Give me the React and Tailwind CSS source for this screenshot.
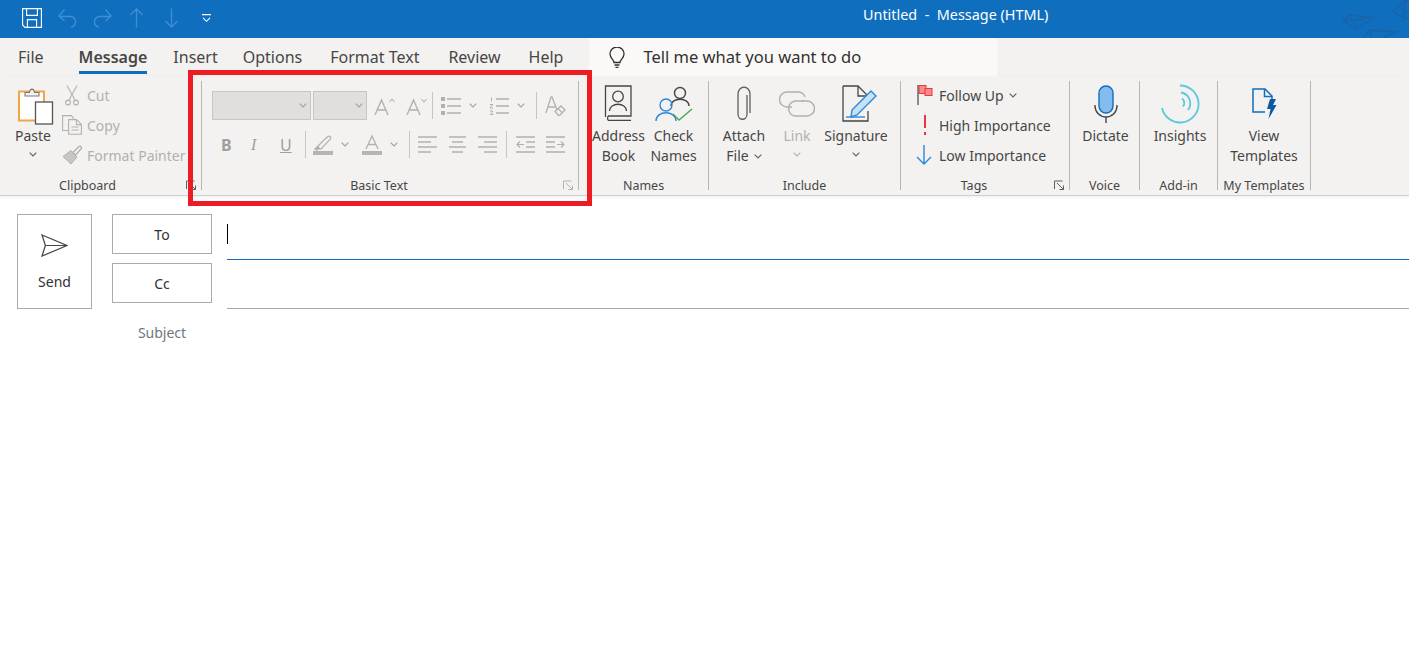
import React from 'react'

const font = { fontFamily: '"Noto Sans", "Open Sans", sans-serif' }

function Chevron({ className = '', color = '#605e5c' }) {
  return (
    <svg width="8" height="5" viewBox="0 0 8 5" className={className} fill="none" stroke={color} strokeWidth="1.1">
      <path d="M.7.7 4 4 7.3.7" />
    </svg>
  )
}

function Launcher({ color = '#605e5c' }) {
  return (
    <svg width="11" height="11" viewBox="0 0 11 11" fill="none" stroke={color} strokeWidth="1" className="absolute right-[4px] bottom-[5px]">
      <path d="M8.5 1H.5v8" />
      <path d="M3 3l6.5 6.5M9.5 5.5v4h-4" />
    </svg>
  )
}

function Sep() {
  return <div className="w-px h-[109px] shrink-0 bg-[#b8b6b4]" />
}

function VSep({ h = 'h-[27px]', className = '' }) {
  return <div className={`w-px ${h} bg-[#c8c6c4] ${className}`} />
}

function Group({ width, label, labelPad = '', launcher, launcherColor, children }) {
  return (
    <div className={`relative shrink-0 flex flex-col h-[115px] ${width}`}>
      <div className="h-[95px] flex">{children}</div>
      <div className={`h-[20px] leading-[20px] text-center text-[12.5px] text-[#484644] whitespace-nowrap ${labelPad}`}>{label}</div>
      {launcher && <Launcher color={launcherColor} />}
    </div>
  )
}

function BigBtn({ width, icon, lines, disabled, className = '' }) {
  return (
    <div className={`shrink-0 flex flex-col items-center ${width} ${className}`}>
      <div className="h-[45px] flex items-center justify-center">{icon}</div>
      <div className={`text-[14px] leading-[20px] text-center whitespace-nowrap ${disabled ? 'text-[#b3b0ad]' : 'text-[#484644]'}`}>
        {lines.map((l, i) => <div key={i} className="h-[20px]">{l}</div>)}
      </div>
    </div>
  )
}

function SmallRow({ icon, text, disabled, iconWidth = 'w-[25px]' }) {
  return (
    <div className="h-[30px] flex items-center whitespace-nowrap">
      <div className={`${iconWidth} flex items-center`}>{icon}</div>
      <span className={`text-[14px] ${disabled ? 'text-[#b3b0ad]' : 'text-[#484644]'}`}>{text}</span>
    </div>
  )
}

const grey = '#b3b0ad'

function SaveIcon() {
  return (
    <svg width="20" height="20" viewBox="0 0 20 20" fill="none" stroke="#fff" strokeWidth="1.1">
      <path d="M.6.6h18.8v18.8H3L.6 17z" />
      <path d="M4.6.8v6.6h10.8V.8" />
      <path d="M5.4 19.2v-7.6h9.2v7.6" />
    </svg>
  )
}

function UndoIcon({ flip }) {
  return (
    <svg width="19" height="20" viewBox="0 0 19 20" fill="none" stroke="#3e8ed4" strokeWidth="1.4" className={flip ? '-scale-x-100' : ''}>
      <path d="M1 8.5h11a5.4 5.4 0 0 1 3.5 9.6L13 19.6" />
      <path d="M6.5 1.5 1 8l5.5 5" />
    </svg>
  )
}

function ArrowV({ down }) {
  return (
    <svg width="13" height="20" viewBox="0 0 13 20" fill="none" stroke="#3e8ed4" strokeWidth="1.4" className={down ? 'rotate-180' : ''}>
      <path d="M6.5 19.5V1M.5 7 6.500 1l6 6" />
    </svg>
  )
}

function Customize() {
  return (
    <svg width="9" height="9" viewBox="0 0 9 9" fill="none" stroke="#fff" strokeWidth="1.1">
      <path d="M0 .6h9M1 3.8l3.5 3.5L8 3.8" />
    </svg>
  )
}

function Origami() {
  return (
    <svg width="70" height="38" viewBox="0 0 70 38" fill="none" stroke="#1a63a8" strokeWidth="1.4" className="absolute right-0 top-0">
      <path d="M4 21 11 15l23 3-17 11zM11 15l6 14M4 21l22-2" />
      <path d="M24 38 31 30l26 2-13 6M31 30l2 8" />
      <path d="M53 12 66 1h4M53 12l17 7M66 1l-1 18M60 7l10 6" />
    </svg>
  )
}

function PasteIcon() {
  return (
    <svg width="36" height="39" viewBox="0 0 36 39">
      <rect x="1" y="5.5" width="25" height="29" fill="#fff" stroke="#f0a646" strokeWidth="2" />
      <path d="M7 10V6.5h4.5C12 2 16 2 16.5 6.5H21V10z" fill="#f3f2f1" stroke="#7a7876" strokeWidth="1.1" />
      <rect x="17.5" y="16" width="17" height="22" fill="#fff" stroke="#565452" strokeWidth="1.3" />
    </svg>
  )
}

function CutIcon() {
  return (
    <svg width="14" height="21" viewBox="0 0 14 21" fill="none" stroke={grey} strokeWidth="1.1" className="ml-[3px]">
      <path d="M2 .5 10 15M12 .5 4 15" />
      <circle cx="3" cy="17.5" r="2.4" />
      <circle cx="11" cy="17.5" r="2.4" />
    </svg>
  )
}

function CopyIcon() {
  return (
    <svg width="20" height="20" viewBox="0 0 20 20" fill="none" stroke={grey} strokeWidth="1.1">
      <path d="M6 15.5H.6V.6h8.8l2.4 3" />
      <path d="M6.6 4.6h8l4.8 4.8v9.9H6.6zM14.4 4.8v4.8h4.8M9.5 12h7M9.5 15h7" />
    </svg>
  )
}

function PainterIcon() {
  return (
    <svg width="21" height="20" viewBox="0 0 21 20">
      <path d="M1 11.5 9 5.5l6 6.5-6 7z" fill="#c8c6c4" stroke={grey} />
      <path d="M11 7.5 17 1.5c1.5-1 3 .5 2.2 2.2L13.5 10z" fill="none" stroke={grey} strokeWidth="1.4" />
    </svg>
  )
}

function Lines({ align }) {
  const rows = {
    left: [[0, 19], [0, 13], [0, 19], [0, 13]],
    center: [[1, 18], [4, 15], [1, 18], [4, 15]],
    right: [[0, 19], [6, 19], [0, 19], [6, 19]],
  }[align]
  return (
    <svg width="19" height="17" viewBox="0 0 19 17" stroke={grey} strokeWidth="1.5">
      {rows.map((r, i) => <path key={i} d={`M${r[0]} ${1 + i * 5}H${r[1]}`} />)}
    </svg>
  )
}

function Indent({ flip }) {
  return (
    <svg width="19" height="17" viewBox="0 0 19 17" fill="none" stroke={grey} strokeWidth="1.5" className={flip ? '-scale-x-100' : ''}>
      <path d="M0 1h19M10 6h9M10 11h9M0 16h19" />
      <path d="M8 8.5H1M4 5.5l-3 3 3 3" strokeWidth="1.2" />
    </svg>
  )
}

function GrowA({ up }) {
  return (
    <svg width="22" height="20" viewBox="0 0 22 20" fill="none" stroke={grey}>
      <path d="M2 19 8.500 4 15 19M4.300 14h8.400" strokeWidth="1.4" />
      <path d={up ? 'M16.500 6 19 3l2.500 3' : 'M16.500 3 19 6l2.500-3'} strokeWidth="1.1" />
    </svg>
  )
}

function Bullets() {
  return (
    <svg width="20" height="18" viewBox="0 0 20 18" stroke={grey} strokeWidth="1.5" fill={grey}>
      <rect x=".5" y=".5" width="3" height="3" strokeWidth="1" />
      <rect x=".5" y="7.5" width="3" height="3" strokeWidth="1" />
      <rect x=".5" y="14.5" width="3" height="3" strokeWidth="1" />
      <path d="M6 2h14M6 9h14M6 16h14" />
    </svg>
  )
}

function Numbering() {
  return (
    <svg width="20" height="18" viewBox="0 0 20 18" stroke={grey} strokeWidth="1.5">
      <path d="M7 2h13M7 9h13M7 16h13" />
      <path d="M2.500.5v4M.8 7.500h3L1 11h3M.8 14h3l-1.400 1.600L4 17.500H.8" fill="none" strokeWidth="1" />
    </svg>
  )
}

function ClearFormat() {
  return (
    <svg width="21" height="20" viewBox="0 0 21 20" fill="none" stroke={grey}>
      <path d="M1 17 6 1h1l5 13M3 11h7" strokeWidth="1.3" />
      <path d="M10 15.500 16 10l4 4-5.500 5.500h-1z" strokeWidth="1.3" />
      <path d="M13 12.500 17 16.500" strokeWidth="1.100" />
    </svg>
  )
}

function Highlighter() {
  return (
    <svg width="20" height="20" viewBox="0 0 20 20">
      <path d="M2 14 12 4l3-2.500c1.800-1 3.500.8 2.500 2.500L8 14H5l-1 1.500z" fill="none" stroke={grey} strokeWidth="1.200" />
      <path d="M1 15 5 11l3 3H3z" fill={grey} />
      <rect y="16" width="20" height="4" fill="#b8b4af" />
    </svg>
  )
}

function FontColor() {
  return (
    <svg width="20" height="20" viewBox="0 0 20 20">
      <path d="M4 14 10 1l6 13M6.200 9.500h7.600" fill="none" stroke={grey} strokeWidth="1.300" />
      <rect y="16" width="20" height="4" fill="#b8b4af" />
    </svg>
  )
}

function AddressBook() {
  return (
    <svg width="28" height="36" viewBox="0 0 28 36" fill="none" stroke="#484644" strokeWidth="1.300" className="mr-[2px] mb-[2px]">
      <path d="M1.500 32V1h25.500v30H4.500a3 3 0 0 0 0 4.400h22.500" />
      <circle cx="14" cy="11.500" r="5.300" />
      <path d="M5.500 26c0-9 17-9 17 0" />
    </svg>
  )
}

function CheckNames() {
  return (
    <svg width="39" height="38" viewBox="0 0 39 38" fill="none" strokeWidth="1.400" className="ml-[2px]">
      <circle cx="25" cy="8" r="5.500" stroke="#484644" />
      <path d="M16 21c0-9 18-9 18 0" stroke="#484644" />
      <circle cx="11" cy="20" r="6" stroke="#2b88d8" />
      <path d="M1 36c0-11 20-11 20 0" stroke="#2b88d8" />
      <path d="M18 29l6 6L37 24" stroke="#4ba757" />
    </svg>
  )
}

function Clip() {
  return (
    <svg width="16" height="36" viewBox="0 0 16 36" fill="none" stroke="#605e5c" strokeWidth="1.300">
      <path d="M11.500 9v19c0 7-9 7-9 0V8c0-9 12-9 12 0v19" transform="translate(-.5 0)" />
    </svg>
  )
}

function LinkIcon() {
  return (
    <svg width="36" height="26" viewBox="0 0 36 26" fill="none" stroke={grey} strokeWidth="1.400">
      <path d="M13 16H8A7.500 7.500 0 0 1 8 1h11a7.500 7.500 0 0 1 7 5" />
      <path d="M23 10h5a7.500 7.500 0 0 1 0 15H17a7.500 7.500 0 0 1-7-5" />
      <path d="M10 20a7.500 7.500 0 0 1 7-10h8" />
    </svg>
  )
}

function SignatureIcon() {
  return (
    <svg width="36" height="37" viewBox="0 0 36 37" fill="none" className="ml-[7px]">
      <path d="M1 1h15l10 10v2M26 26v10H1V1" stroke="#484644" strokeWidth="1.300" />
      <path d="M16 1v10h10" stroke="#484644" strokeWidth="1.300" />
      <path d="M10 25 29 6l5 5-19 19-6 2z" fill="#c5e2f7" stroke="#2b88d8" strokeWidth="1.400" />
      <path d="M4 32h19" stroke="#2b88d8" strokeWidth="1.400" />
    </svg>
  )
}

function FlagIcon() {
  return (
    <svg width="16" height="20" viewBox="0 0 16 20" className="ml-[1px]">
      <path d="M1 0v20" stroke="#605e5c" strokeWidth="1.400" />
      <rect x="2" y=".5" width="7" height="8" fill="#f58b8b" stroke="#e8383c" />
      <rect x="8" y="3.500" width="7" height="7" fill="#f58b8b" stroke="#e8383c" />
    </svg>
  )
}

function Mic() {
  return (
    <svg width="24" height="38" viewBox="0 0 24 38" fill="none">
      <rect x="5" y="1" width="14" height="27" rx="7" fill="#83bced" stroke="#106ebe" strokeWidth="1.400" />
      <path d="M1 20v1a11 11 0 0 0 22 0v-1M12 32v6" stroke="#484644" strokeWidth="1.400" />
    </svg>
  )
}

function Insights() {
  return (
    <svg width="40" height="40" viewBox="0 0 40 40" fill="none" stroke="#5bc8dc" strokeWidth="1.800">
      <path d="M20 1.500A18.500 18.500 0 1 1 2 24" />
      <path d="M21 8.500A11 11 0 0 1 28 26" />
      <path d="M22 14.500a5.500 5.500 0 0 1 1 8" />
    </svg>
  )
}

function TemplatesIcon() {
  return (
    <svg width="25" height="31" viewBox="0 0 25 31" fill="none">
      <path d="M13 24H1V1h12l7 7v5" stroke="#106ebe" strokeWidth="1.500" />
      <path d="M12.500 1v7.500h7.500" stroke="#106ebe" strokeWidth="1.500" />
      <path d="M18 11h6l-3 6h3.500l-8 14 2-10H15z" fill="#0f5a9e" />
    </svg>
  )
}

function Bulb() {
  return (
    <svg width="16" height="21" viewBox="0 0 16 21" fill="none" stroke="#323130" strokeWidth="1.300">
      <path d="M5 15.500c0-3-4-4-4-8.500a7 7 0 0 1 14 0c0 4.500-4 5.500-4 8.500z" />
      <path d="M5.500 18h5M6.500 20.300h3" />
    </svg>
  )
}

function SendIcon() {
  return (
    <svg width="27" height="23" viewBox="0 0 28 24" fill="none" stroke="#484644" strokeWidth="1.300">
      <path d="M1 1 27 12 1 23 4.500 12zM4.500 12H27" />
    </svg>
  )
}

function Tab({ children, className = '' }) {
  return <div className={`text-[16px] text-[#484644] leading-[38px] whitespace-nowrap ${className}`}>{children}</div>
}

function Select({ width }) {
  return (
    <div className={`${width} h-[29px] border border-[#c8c6c4] bg-[#e1dfdd] flex items-center justify-end pr-[3px]`}>
      <Chevron color="#a19f9d" />
    </div>
  )
}

export default function App() {
  return (
    <div className="relative w-[1409px] h-[648px] overflow-hidden bg-white" style={font}>
      {/* title bar */}
      <div className="relative h-[38px] bg-[#106ebe] flex items-start">
        <div className="flex items-center h-[36px] pl-[22px]">
          <SaveIcon />
          <div className="ml-[16px]"><UndoIcon /></div>
          <div className="ml-[16px]"><UndoIcon flip /></div>
          <div className="ml-[18px]"><ArrowV /></div>
          <div className="ml-[22px]"><ArrowV down /></div>
          <div className="ml-[24px]"><Customize /></div>
        </div>
        <div className="absolute left-[863px] top-0 leading-[30px] text-[14.4px] text-white whitespace-pre">Untitled  -  Message (HTML)</div>
        <Origami />
      </div>

      {/* tabs */}
      <div className="h-[38px] bg-[#f3f2f1] flex items-start">
        <Tab className="ml-[18px]">File</Tab>
        <div className="relative ml-[35px]">
          <Tab className="font-semibold">Message</Tab>
          <div className="absolute left-0 right-0 bottom-[2px] h-[3px] bg-[#106ebe]" />
        </div>
        <Tab className="ml-[26px]">Insert</Tab>
        <Tab className="ml-[25px]">Options</Tab>
        <Tab className="ml-[28px]">Format Text</Tab>
        <Tab className="ml-[29px]">Review</Tab>
        <Tab className="ml-[28px]">Help</Tab>
        <div className="ml-[26px] w-[408px] h-[38px] bg-[#faf9f8] flex items-center pl-[20px]">
          <Bulb />
          <span className="ml-[18px] text-[16.5px] text-[#323130]">Tell me what you want to do</span>
        </div>
      </div>

      {/* ribbon */}
      <div className="h-[120px] bg-[#f3f2f1] pt-[5px] flex items-start border-b border-[#d2d0ce] shadow-[0_1px_3px_rgba(0,0,0,0.08)]">
        <Group width="w-[201px]" label="Clipboard" labelPad="pr-[26px]" launcher>
          <BigBtn width="w-[50px] ml-[8px]" icon={<div className="mt-[4px] ml-[5px]"><PasteIcon /></div>} lines={['Paste', <Chevron key="c" className="mx-auto mt-[6px]" />]} />
          <div className="ml-[4px] -mt-[1px]">
            <SmallRow disabled text="Cut" icon={<CutIcon />} />
            <SmallRow disabled text="Copy" icon={<CopyIcon />} />
            <SmallRow disabled text="Format Painter" icon={<PainterIcon />} />
          </div>
        </Group>
        <Sep />

        <Group width="w-[376px]" label="Basic Text" labelPad="pr-[22px]" launcher launcherColor={grey}>
          <div className="pl-[10px] pt-[10px]">
            <div className="flex items-center h-[29px]">
              <Select width="w-[99px]" />
              <div className="ml-[2px]"><Select width="w-[54px]" /></div>
              <div className="ml-[6px]"><GrowA up /></div>
              <div className="ml-[10px]"><GrowA /></div>
              <VSep className="ml-[5px]" />
              <div className="ml-[8px]"><Bullets /></div>
              <Chevron className="ml-[8px]" color="#a19f9d" />
              <div className="ml-[12px]"><Numbering /></div>
              <Chevron className="ml-[8px]" color="#a19f9d" />
              <VSep className="ml-[11px]" />
              <div className="ml-[8px]"><ClearFormat /></div>
            </div>
            <div className="flex items-center h-[27px] mt-[11px]">
              <span className="ml-[9px] w-[20px] text-[16px] font-bold text-[#a19f9d]">B</span>
              <span className="ml-[10px] w-[20px] text-[16px] italic text-[#a19f9d]" style={{ fontFamily: '"Liberation Serif", serif' }}>I</span>
              <span className="ml-[9px] w-[20px] text-[16px] underline text-[#a19f9d]">U</span>
              <VSep className="ml-[5px]" />
              <div className="ml-[7px]"><Highlighter /></div>
              <Chevron className="ml-[8px]" color="#a19f9d" />
              <div className="ml-[13px]"><FontColor /></div>
              <Chevron className="ml-[8px]" color="#a19f9d" />
              <VSep className="ml-[11px]" />
              <div className="ml-[8px]"><Lines align="left" /></div>
              <div className="ml-[11px]"><Lines align="center" /></div>
              <div className="ml-[11px]"><Lines align="right" /></div>
              <VSep className="ml-[9px]" />
              <div className="ml-[9px]"><Indent /></div>
              <div className="ml-[11px]"><Indent flip /></div>
            </div>
          </div>
        </Group>
        <Sep />

        <Group width="w-[129px]" label="Names">
          <BigBtn width="w-[55px] ml-[12px]" icon={<AddressBook />} lines={['Address', 'Book']} />
          <BigBtn width="w-[55px]" icon={<CheckNames />} lines={['Check', 'Names']} />
        </Group>
        <Sep />

        <Group width="w-[191px]" label="Include">
          <BigBtn width="w-[52px] ml-[9px]" icon={<Clip />} lines={['Attach', <span key="f" className="inline-flex items-center gap-[5px]">File <Chevron /></span>]} />
          <BigBtn width="w-[54px]" disabled icon={<LinkIcon />} lines={['Link', <Chevron key="c" className="mx-auto mt-[6px]" color={grey} />]} />
          <BigBtn width="w-[64px]" icon={<SignatureIcon />} lines={['Signature', <Chevron key="c" className="mx-auto mt-[6px]" />]} />
        </Group>
        <Sep />

        <Group width="w-[168px]" label="Tags" labelPad="pr-[22px]" launcher>
          <div className="ml-[15px] -mt-[1px]">
            <SmallRow iconWidth="w-[23px]" text={<span className="inline-flex items-center gap-[5px]">Follow Up <Chevron /></span>} icon={<FlagIcon />} />
            <SmallRow iconWidth="w-[23px]" text="High Importance" icon={<span className="ml-[8px] w-[2px] h-[20px] flex flex-col justify-between"><span className="h-[13px] bg-[#e8383c]" /><span className="h-[3px] bg-[#e8383c]" /></span>} />
            <SmallRow iconWidth="w-[23px]" text="Low Importance" icon={
              <svg width="16" height="20" viewBox="0 0 16 20" fill="none" stroke="#2b88d8" strokeWidth="1.400"><path d="M8 0v19M1 12l7 7 7-7" /></svg>
            } />
          </div>
        </Group>
        <Sep />

        <Group width="w-[69px]" label="Voice">
          <BigBtn width="w-[69px] pl-[2px]" icon={<Mic />} lines={['Dictate']} />
        </Group>
        <Sep />

        <Group width="w-[77px]" label="Add-in">
          <BigBtn width="w-[77px] pl-[3px]" icon={<Insights />} lines={['Insights']} />
        </Group>
        <Sep />

        <Group width="w-[92px]" label="My Templates">
          <BigBtn width="w-[92px]" icon={<TemplatesIcon />} lines={['View', 'Templates']} />
        </Group>
        <Sep />
      </div>

      {/* compose */}
      <div className="flex items-start pl-[17px] pt-[18px]">
        <div className="w-[75px] h-[95px] border border-[#ababab] flex flex-col items-center pt-[19px]">
          <SendIcon />
          <span className="mt-[14px] text-[14px] text-[#323130]">Send</span>
        </div>
        <div className="ml-[20px] w-[100px]">
          <div className="h-[40px] border border-[#ababab] flex items-center justify-center text-[14px] text-[#323130]">To</div>
          <div className="mt-[9px] h-[40px] border border-[#ababab] flex items-center justify-center text-[14px] text-[#323130]">Cc</div>
          <div className="mt-[20px] text-center text-[14px] leading-[20px] text-[#6f7780]">Subject</div>
        </div>
        <div className="ml-[15px] flex-1">
          <div className="h-[46px] border-b border-[#106ebe] pt-[10px]">
            <div className="w-px h-[20px] bg-black" />
          </div>
          <div className="h-[49px] border-b border-[#ababab]" />
        </div>
      </div>

      {/* annotation */}
      <div className="absolute left-[188px] top-[70px] w-[404px] h-[136px] border-[5px] border-[#ed1c24]" />
    </div>
  )
}
